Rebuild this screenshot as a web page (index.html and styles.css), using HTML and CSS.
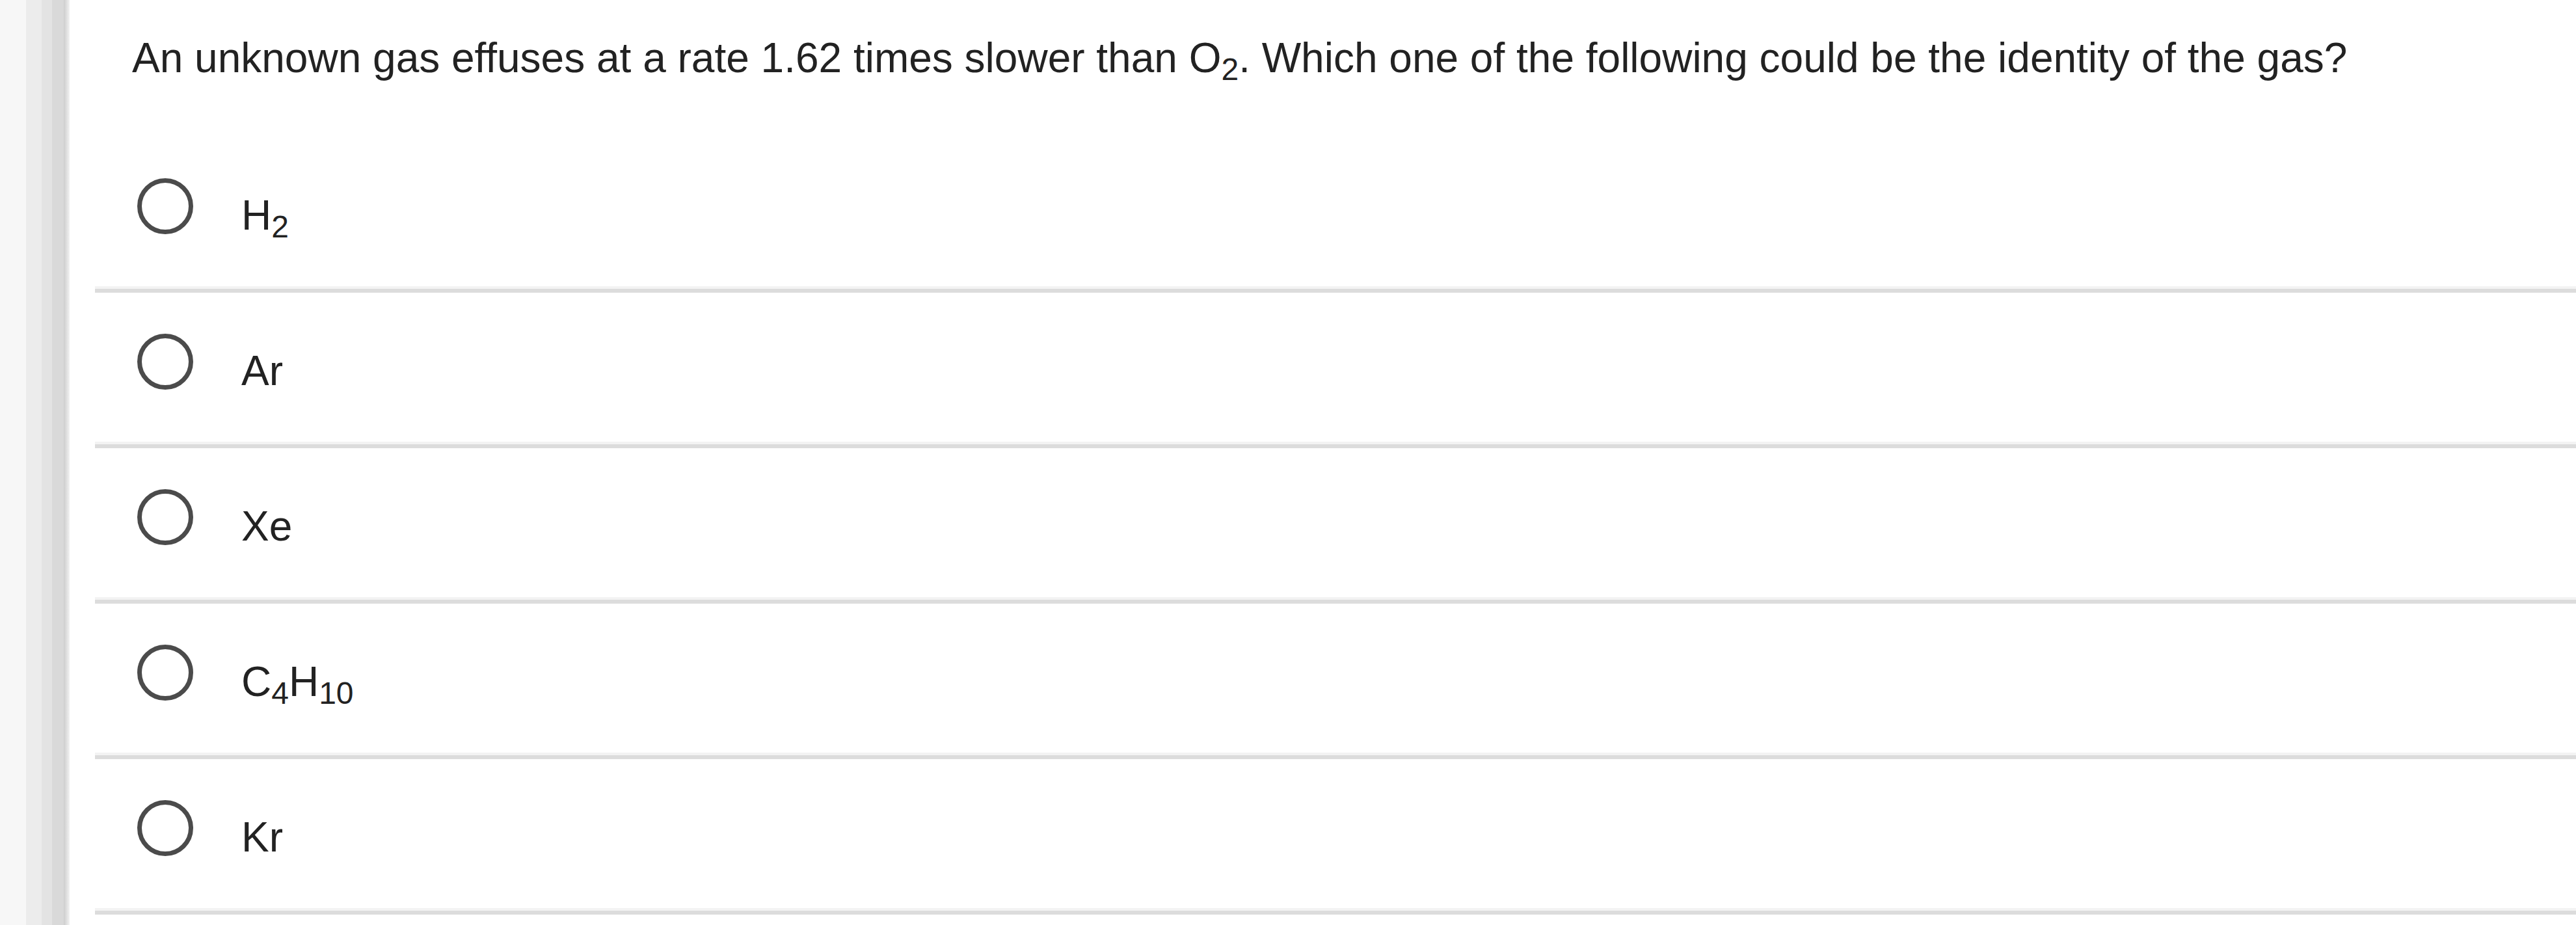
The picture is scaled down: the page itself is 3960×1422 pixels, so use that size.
FILE: index.html
```html
<!DOCTYPE html>
<html lang="en">
<head>
  <meta charset="UTF-8">
  <meta name="viewport" content="width=device-width, initial-scale=1.0">
  <title>Quiz Question</title>
  <link rel="stylesheet" href="styles.css">
</head>
<body>
  <div class="page">
    <div class="sidebar"></div>

    <div class="question">
      <p class="question-text">
        An unknown gas effuses at a rate 1.62 times slower than O<sub>2</sub>. Which one of the following could be the identity of the gas?
      </p>

      <!-- Answer choices -->
      <ul class="answers">
        <li class="answer">
          <input type="radio" name="gas" id="a1">
          <label for="a1">H<sub>2</sub></label>
        </li>
        <li class="answer">
          <input type="radio" name="gas" id="a2">
          <label for="a2">Ar</label>
        </li>
        <li class="answer">
          <input type="radio" name="gas" id="a3">
          <label for="a3">Xe</label>
        </li>
        <li class="answer">
          <input type="radio" name="gas" id="a4">
          <label for="a4">C<sub>4</sub>H<sub>10</sub></label>
        </li>
        <li class="answer">
          <input type="radio" name="gas" id="a5">
          <label for="a5">Kr</label>
        </li>
      </ul>
    </div>
  </div>
</body>
</html>
```

FILE: styles.css
```css
body {
  font-family: "Liberation Sans", Arial, Helvetica, sans-serif;
  color: #222;
  background: #fff;
  margin: 0;
  padding: 0;
}

.page {
  display: flex;
  min-height: 100vh;
}

.sidebar {
  width: 107px;
  flex-shrink: 0;
  background: linear-gradient(90deg,
    #f7f7f7 0, #f7f7f7 40px,
    #ececec 40px, #ececec 64px,
    #e3e3e3 64px, #e3e3e3 80px,
    #d9d9d9 80px, #d9d9d9 98px,
    #cdcdcd 98px, #f2f2f2 107px);
}

.question {
  flex: 1;
  padding-left: 39px;
}

.question-text {
  margin: 52px 0 85px 57px;
  font-size: 64px;
  line-height: 74px;
}

sub {
  font-size: 0.75em;
  line-height: 0;
  vertical-align: -12px;
}

.answers {
  list-style: none;
  margin: 0;
  padding: 0;
}

.answer {
  display: flex;
  align-items: flex-start;
  padding: 63px 0 76px 65px;
  border-bottom: 6px solid #dcdcdc;
  box-shadow: inset 0 -4px 0 #f3f3f3;
}

.answer input {
  appearance: none;
  -webkit-appearance: none;
  box-sizing: border-box;
  width: 86px;
  height: 86px;
  margin: 0;
  border: 7px solid #4b4b4b;
  border-radius: 50%;
  background: #fff;
  flex-shrink: 0;
}

.answer label {
  margin-left: 74px;
  margin-top: 20px;
  font-size: 64px;
  line-height: 74px;
}
```
